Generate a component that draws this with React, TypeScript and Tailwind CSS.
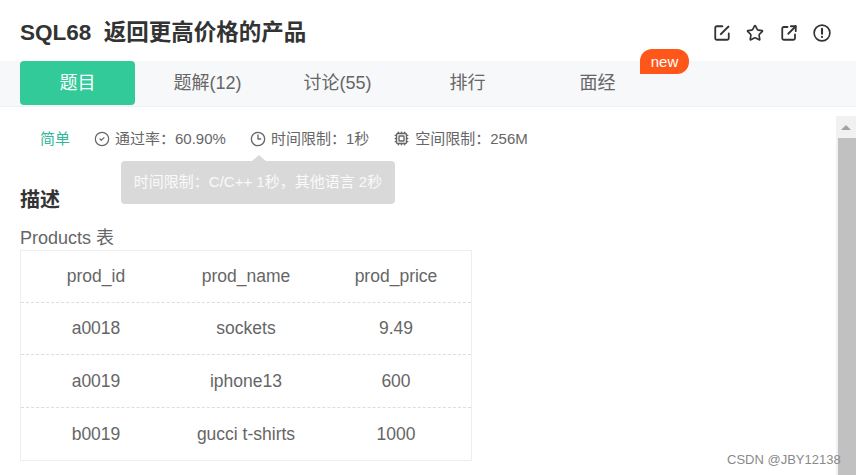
import { Star, CircleCheck, Clock3, Cpu } from "lucide-react";

const FONT = "font-['Liberation_Sans','Noto_Sans_CJK_SC',sans-serif]";

const TABS = ["题目", "题解(12)", "讨论(55)", "排行", "面经"];

const ROWS = [
  ["prod_id", "prod_name", "prod_price"],
  ["a0018", "sockets", "9.49"],
  ["a0019", "iphone13", "600"],
  ["b0019", "gucci t-shirts", "1000"],
];

function EditIcon() {
  return (
    <svg width="18" height="18" viewBox="0 0 24 24" fill="none" stroke="currentColor" strokeWidth="2.4" strokeLinecap="round" strokeLinejoin="round">
      <path d="M21 12.5V19a2 2 0 0 1-2 2H5a2 2 0 0 1-2-2V5a2 2 0 0 1 2-2h7.5" />
      <path d="M10.5 13.5 20.5 3.5" strokeWidth="2.8" />
    </svg>
  );
}

function ShareIcon() {
  return (
    <svg width="18" height="18" viewBox="0 0 24 24" fill="none" stroke="currentColor" strokeWidth="2.4" strokeLinecap="round" strokeLinejoin="round">
      <path d="M10 4H5a2 2 0 0 0-2 2v13a2 2 0 0 0 2 2h13a2 2 0 0 0 2-2v-5" />
      <path d="M11 13 21 3" />
      <path d="M14.5 3H21v6.5" />
    </svg>
  );
}

function AlertIcon() {
  return (
    <svg width="18" height="18" viewBox="0 0 24 24" fill="none" stroke="currentColor" strokeWidth="2.2" strokeLinecap="round">
      <circle cx="12" cy="12" r="10.5" />
      <path d="M12 6.5v6.5" strokeWidth="2.8" />
      <path d="M12 17.2v.1" strokeWidth="3" />
    </svg>
  );
}

export default function App() {
  return (
    <div className={`${FONT} relative h-[475px] w-[856px] overflow-hidden bg-white text-[#666]`}>
      {/* Title */}
      <div className="flex h-[61px] items-center justify-between pt-[5px] pl-5 pr-[25px]">
        <h1 className="text-[22.5px] leading-[30px] font-bold whitespace-pre text-[#333]">SQL68  返回更高价格的产品</h1>
        <div className="flex items-center gap-[15.5px] text-[#333]">
          <EditIcon />
          <Star size={18} strokeWidth={2.2} />
          <ShareIcon />
          <AlertIcon />
        </div>
      </div>

      {/* Tabs */}
      <div className="relative flex h-[46px] gap-[15px] border-b border-[#eef0f3] bg-[#f7f8fa] pl-5">
        {TABS.map((tab, i) => (
          <div
            key={tab}
            className={
              i === 0
                ? "flex h-[44px] w-[115px] items-center justify-center rounded-[4px] bg-[#32ca99] text-[18px] text-white"
                : "flex h-[44px] w-[115px] items-center justify-center text-[18px] text-[#666]"
            }
          >
            {tab}
          </div>
        ))}
        <div className="absolute top-[-12px] left-[640px] flex h-[25px] w-[49px] items-center justify-center rounded-t-[12px] rounded-br-[12px] bg-[#ff5719] pt-[1px] text-[15px] text-white">
          new
        </div>
      </div>

      <div className="flex">
        <div className="flex-1 pl-5">
          {/* Meta */}
          <div className="flex h-[64px] items-center pl-5 text-[15px]">
            <span className="mr-[24px] text-[#32b79a]">简单</span>
            <span className="mr-[24px] flex items-center gap-[5px]">
              <CircleCheck size={16} strokeWidth={1.8} className="mb-[1px]" />
              通过率：60.90%
            </span>
            <span className="mr-[25px] flex items-center gap-[5px]">
              <Clock3 size={16} strokeWidth={2} className="mb-[1px]" />
              时间限制：1秒
            </span>
            <span className="flex items-center gap-[6px]">
              <Cpu size={15} strokeWidth={2.2} className="mb-[1px]" />
              空间限制：256M
            </span>
          </div>

          <h2 className="mt-[15px] text-[20px] leading-[28px] font-bold text-[#333]">描述</h2>
          <p className="mt-[12px] text-[18px] leading-[24px]">Products 表</p>

          {/* Table */}
          <div className="w-[452px] border border-[#eeeeee]">
            {ROWS.map((row, r) => (
              <div
                key={row[0]}
                className={
                  r === 3
                    ? "grid h-[52px] grid-cols-[150px_150px_150px] items-center text-center text-[17.5px]"
                    : r === 2
                      ? "grid h-[53px] grid-cols-[150px_150px_150px] items-center border-b border-dashed border-[#dddddd] text-center text-[17.5px]"
                      : "grid h-[52px] grid-cols-[150px_150px_150px] items-center border-b border-dashed border-[#dddddd] text-center text-[17.5px]"
                }
              >
                {row.map((cell) => (
                  <span key={cell}>{cell}</span>
                ))}
              </div>
            ))}
          </div>
        </div>

        {/* Scrollbar */}
        <div className="mt-[9px] flex h-[400px] w-5 flex-col items-end bg-[#f1f1f1]">
          <div className="flex h-[22px] w-full shrink-0 items-center justify-center">
            <div className="h-0 w-0 border-x-[5px] border-b-[5px] border-x-transparent border-b-[#a3a3a3]" />
          </div>
          <div className="h-full w-[18px] bg-[#c1c1c1]" />
        </div>
      </div>

      {/* Tooltip */}
      <div className="absolute top-[161px] left-[121px] flex h-[43px] w-[274px] items-center justify-center rounded-[4px] bg-[#d9d9d9] text-[15px] text-[#fafafa]">
        时间限制：C/C++ 1秒，其他语言 2秒
        <div className="absolute top-[-6px] left-[131px] h-0 w-0 border-x-[7px] border-b-[6px] border-x-transparent border-b-[#d9d9d9]" />
      </div>

      {/* Watermark */}
      <div className="absolute top-[452px] left-[727px] text-[13px] leading-[16px] whitespace-nowrap text-[#8a8a8a]">CSDN @JBY12138</div>
    </div>
  );
}
